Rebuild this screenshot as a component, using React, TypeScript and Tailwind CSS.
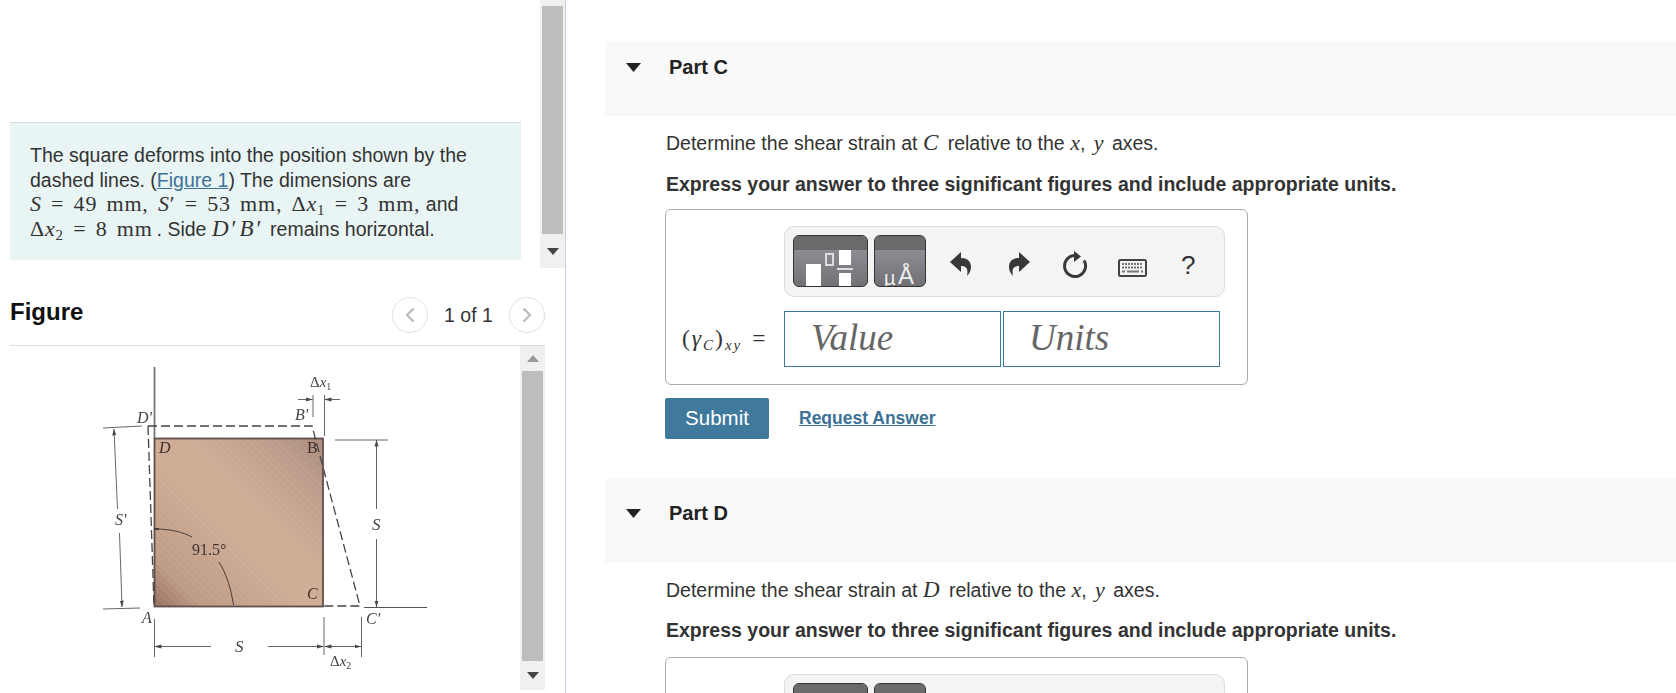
import React from "react";

const sans = "font-['Liberation_Sans',Arial,sans-serif]";
const serif = "font-['Liberation_Serif','Times_New_Roman',serif]";

function M({ children }: { children: React.ReactNode }) {
  return <span className={`${serif} text-[22px] tracking-[0.8px] [word-spacing:3px] text-[#333]`}>{children}</span>;
}
function I({ children }: { children: React.ReactNode }) {
  return <i className={serif}>{children}</i>;
}

function Arrow({ dir, color }: { dir: "up" | "down"; color: string }) {
  return (
    <svg width="12" height="7" viewBox="0 0 12 7" className="block">
      <polygon points={dir === "down" ? "0,0 12,0 6,7" : "0,7 12,7 6,0"} fill={color} />
    </svg>
  );
}

function Figure() {
  const thin = { stroke: "#666", strokeWidth: 1, fill: "none" };
  const dash = { stroke: "#444", strokeWidth: 1.3, fill: "none", strokeDasharray: "9 4" };
  const label = "font-['Liberation_Serif',serif] italic";
  return (
    <svg width="370" height="343" viewBox="0 0 370 343" className="block">
      <defs>
        <linearGradient id="plate" x1="0" y1="1" x2="1" y2="0">
          <stop offset="0" stopColor="#96705f" />
          <stop offset="0.14" stopColor="#bd9a85" />
          <stop offset="0.45" stopColor="#cfac95" />
          <stop offset="0.62" stopColor="#cdab94" />
          <stop offset="0.85" stopColor="#bb9b89" />
          <stop offset="1" stopColor="#a98a7e" />
        </linearGradient>
        <pattern id="hatch" width="5" height="5" patternUnits="userSpaceOnUse" patternTransform="rotate(45)">
          <rect width="5" height="2" fill="#ffffff" opacity="0.05" />
        </pattern>
        <filter id="soft" x="-5%" y="-5%" width="110%" height="110%">
          <feGaussianBlur stdDeviation="0.5" />
        </filter>
        <marker id="tip" markerWidth="7" markerHeight="6" refX="6.5" refY="3" orient="auto-start-reverse">
          <polygon points="0,1 7,3 0,5" fill="#4a4a4a" />
        </marker>
      </defs>
      <g filter="url(#soft)">
        <line x1="74.5" y1="18" x2="74.5" y2="89" stroke="#777" strokeWidth="1.8" />
        <rect x="74.5" y="89.5" width="168.5" height="168" fill="url(#plate)" />
        <rect x="74.5" y="89.5" width="168.5" height="168" fill="url(#hatch)" />
        <rect x="74.5" y="89.5" width="168.5" height="168" fill="none" stroke="#5f4f4a" strokeWidth="1.8" />

        <path d="M68 77 L74 257 M68 77 H232 L280 257 H243" {...dash} />
        <path d="M284 258.5 H347" stroke="#555" strokeWidth="1.2" />
        <path d="M23 260 L60 259" {...thin} />
        <path d="M23 79 L62 77" {...thin} />
        <line x1="39.5" y1="184" x2="42" y2="258" {...thin} markerEnd="url(#tip)" />
        <line x1="34" y1="80" x2="37.5" y2="160" {...thin} markerStart="url(#tip)" />

        <path d="M255 91 H308" {...thin} />
        <line x1="296.5" y1="91" x2="296.5" y2="160" {...thin} markerStart="url(#tip)" />
        <line x1="296.5" y1="190" x2="296.5" y2="258" {...thin} markerEnd="url(#tip)" />

        <path d="M74.5 270 V308 M244 268 V306 M281.5 268 V308" {...thin} />
        <line x1="75" y1="297.5" x2="131" y2="297.5" {...thin} markerStart="url(#tip)" />
        <line x1="188" y1="297.5" x2="243.5" y2="297.5" {...thin} markerEnd="url(#tip)" />
        <line x1="245" y1="297.5" x2="281" y2="297.5" {...thin} markerStart="url(#tip)" markerEnd="url(#tip)" />

        <path d="M233 46 V68 M244.5 46 V87" {...thin} />
        <line x1="218" y1="50.5" x2="232.5" y2="50.5" {...thin} markerEnd="url(#tip)" />
        <line x1="260" y1="50.5" x2="245" y2="50.5" {...thin} markerEnd="url(#tip)" />

        <path d="M76 180 C90 180 103 183 112 188 M139 213 C147 226 151 240 153.5 256" stroke="#4a3d38" strokeWidth="1" fill="none" />
        <path d="M74 180 H79" stroke="#333" strokeWidth="1.6" />
        <text x="112" y="206" fontSize="16" fill="#3f3330" className="font-['Liberation_Serif',serif]">91.5°</text>

        <text x="57" y="74" fontSize="16" fill="#444" className={label}>D'</text>
        <text x="215" y="71" fontSize="16" fill="#444" className={label}>B'</text>
        <text x="79" y="104" fontSize="16" fill="#3d2e2a" className={label}>D</text>
        <text x="227" y="104" fontSize="16" fill="#3d2e2a" className="font-['Liberation_Serif',serif]">B</text>
        <text x="227" y="250" fontSize="16" fill="#3d2e2a" className={label}>C</text>
        <text x="62" y="274" fontSize="16" fill="#444" className={label}>A</text>
        <text x="286" y="275" fontSize="16" fill="#444" className={label}>C'</text>
        <text x="35" y="176" fontSize="16" fill="#444" className={label}>S'</text>
        <text x="292" y="181" fontSize="17" fill="#444" className={label}>S</text>
        <text x="155" y="303" fontSize="17" fill="#444" className={label}>S</text>
        <text x="230" y="38" fontSize="15" fill="#444" className="font-['Liberation_Serif',serif]">Δ<tspan fontStyle="italic">x</tspan><tspan fontSize="10" dy="3">1</tspan></text>
        <text x="250" y="317" fontSize="15" fill="#444" className="font-['Liberation_Serif',serif]">Δ<tspan fontStyle="italic">x</tspan><tspan fontSize="10" dy="3">2</tspan></text>
      </g>
    </svg>
  );
}

function TemplateButton({ wide, bare }: { wide?: boolean; bare?: boolean }) {
  return (
    <div className={`${wide ? "w-[75px]" : "w-[52px]"} h-[52px] shrink-0 rounded-[6px] border border-[#333] overflow-hidden bg-gradient-to-b from-[#98979e] to-[#717176]`}>
      <div className="h-[14px] bg-[#6a6a6a]" />
      {bare ? null : wide ? (
        <svg width="73" height="36" viewBox="0 0 73 36" className="block">
          <rect x="12" y="14" width="15" height="22" fill="#fff" />
          <rect x="32" y="4" width="7" height="11" fill="none" stroke="#ddd" strokeWidth="2" />
          <rect x="45" y="0" width="12" height="15" fill="#fff" />
          <rect x="43" y="18" width="16" height="2" fill="#ddd" />
          <rect x="45" y="23" width="12" height="13" fill="#fff" />
        </svg>
      ) : (
        <div className={`relative h-[36px] ${sans} text-[#eee]`}>
          <span className="absolute left-[9px] top-[20px] text-[20px] leading-[16px]">µ</span>
          <span className="absolute left-[23px] top-[16px] text-[24px] leading-[20px]">Å</span>
        </div>
      )}
    </div>
  );
}

function Toolbar({ bare }: { bare?: boolean }) {
  return (
    <div className="ml-[118px] w-[441px] h-[71px] shrink-0 rounded-[10px] border border-[#ddd] bg-[#f4f4f4] flex items-start pt-[8px] pl-[8px] gap-[6px]">
      <TemplateButton wide bare={bare} />
      <TemplateButton bare={bare} />
      {bare ? null : (
        <div className="flex items-start ml-[-6px] text-[#333]">
          <svg width="21" height="24" viewBox="0 0 21 24" className="ml-[24px] mt-[17px]">
            <path d="M0 10 L11 0 V6 C18 6 21 10 21 15 C21 19 19 22 17 24 C18 19 18 14 11 14 V20 Z" fill="#383838" />
          </svg>
          <svg width="21" height="24" viewBox="0 0 21 24" className="ml-[38px] mt-[17px] -scale-x-100">
            <path d="M0 10 L11 0 V6 C18 6 21 10 21 15 C21 19 19 22 17 24 C18 19 18 14 11 14 V20 Z" fill="#383838" />
          </svg>
          <svg width="26" height="28" viewBox="0 0 26 28" className="ml-[32px] mt-[16px]">
            <path d="M13 4.5 A10.5 10.5 0 1 0 22 9.5" fill="none" stroke="#383838" strokeWidth="3" />
            <polygon points="12,0 19,5.5 12,11" fill="#383838" />
          </svg>
          <svg width="29" height="18" viewBox="0 0 29 18" className="ml-[30px] mt-[24px]">
            <rect x="1" y="1" width="27" height="16" rx="1.5" fill="#f4f4f4" stroke="#444" strokeWidth="2" />
            <path d="M4 5 H25 M4 8.5 H25" stroke="#777" strokeWidth="2" strokeDasharray="2 1" />
            <path d="M4 12.5 H7 M9 12.5 H21 M23 12.5 H25" stroke="#777" strokeWidth="2" />
          </svg>
          <div className={`ml-[34px] mt-[15px] ${sans} text-[26px] leading-[30px] text-[#333]`}>?</div>
        </div>
      )}
    </div>
  );
}

function Part({ letter, tall }: { letter: string; tall?: boolean }) {
  return (
    <>
      <div className={`${tall ? "h-[85px] pt-[24px]" : "h-[75px] pt-[15px]"} bg-[#f9f9f9] flex items-start`}>
        <div className="ml-[21px] w-[29px] pt-[7px]">
          <svg width="15" height="9" viewBox="0 0 15 9" className="block"><polygon points="0,0 15,0 7.5,9" fill="#222" /></svg>
        </div>
        <div className="ml-[14px] text-[20px] leading-[22px] font-bold text-[#222]">Part {letter}</div>
      </div>
      <div className="ml-[61px]">
        <p className="mt-[15px] text-[19.5px] leading-[24px] text-[#333] whitespace-nowrap">
          Determine the shear strain at <span className={`${serif} italic text-[23px] mr-[4px]`}>{letter}</span> relative to the <span className={`${serif} italic text-[22px]`}>x</span>, <span className={`${serif} italic text-[22px] mx-[3px]`}>y</span> axes.
        </p>
        <p className={`${tall ? "mt-[16px]" : "mt-[17px]"} text-[19.5px] leading-[24px] font-bold text-[#333] whitespace-nowrap`}>
          Express your answer to three significant figures and include appropriate units.
        </p>
      </div>
    </>
  );
}

export default function App() {
  return (
    <div className={`w-[1676px] h-[693px] overflow-hidden bg-white flex ${sans}`}>
      {/* left column */}
      <div className="w-[566px] h-full shrink-0 flex flex-col border-r border-[#c6d0e4]">
        <div className="flex h-[287px] shrink-0">
          <div className="w-[540px] pt-[122px] pl-[10px]">
            <div className="w-[511px] h-[138px] border-t border-[#dcdcdc] bg-[#e9f5f5] pt-[20px] pl-[20px] text-[19.5px] leading-[24.6px] text-[#333] whitespace-nowrap">
              <p className="h-[24.6px]">The square deforms into the position shown by the</p>
              <p className="h-[24.6px]">dashed lines. (<a className="text-[#3b7296] underline">Figure 1</a>) The dimensions are</p>
              <p className="h-[24.6px]"><M><I>S</I> = 49 mm, <I>S</I>′ = 53 mm, Δ<I>x</I><sub className="text-[15px]">1</sub> = 3 mm,</M> and</p>
              <p className="h-[24.6px]"><M>Δ<I>x</I><sub className="text-[15px]">2</sub> = 8 mm</M><span className="ml-[4px]">.</span> Side <span className={`${serif} text-[23px] tracking-[3px] text-[#333]`}><I>D</I>′<I>B</I>′</span> remains horizontal.</p>
            </div>
          </div>
          <div className="w-[25px] h-[268px] bg-[#f0f0f0] flex flex-col items-center pt-[6px]">
            <div className="w-[21px] h-[228px] bg-[#bdbdbd]" />
            <div className="flex-1 flex items-center justify-center"><Arrow dir="down" color="#444" /></div>
          </div>
        </div>

        <div className="ml-[10px] w-[535px] h-[60px] -mt-[1px] shrink-0 border-b border-[#dcdcdc] flex items-start">
          <div className="text-[24px] leading-[28px] font-bold text-[#111] mt-[12px]">Figure</div>
          <div className="ml-auto flex items-center mt-[11px] text-[19.5px] text-[#333]">
            <div className="w-[36px] h-[36px] rounded-full border border-[#e2e2e2] flex items-center justify-center">
              <svg width="10" height="16" viewBox="0 0 10 16"><path d="M8.5 1.5 L2 8 L8.5 14.5" fill="none" stroke="#bbb" strokeWidth="2.2" /></svg>
            </div>
            <div className="w-[81px] text-center pt-[2px]">1 of 1</div>
            <div className="w-[36px] h-[36px] rounded-full border border-[#e2e2e2] flex items-center justify-center">
              <svg width="10" height="16" viewBox="0 0 10 16"><path d="M1.5 1.5 L8 8 L1.5 14.5" fill="none" stroke="#bbb" strokeWidth="2.2" /></svg>
            </div>
          </div>
        </div>

        <div className="flex flex-1 min-h-0">
          <div className="w-[520px] pl-[80px] pt-[3px]"><Figure /></div>
          <div className="w-[25px] h-[344px] bg-[#f0f0f0] flex flex-col items-center">
            <div className="h-[25px] flex items-center justify-center"><Arrow dir="up" color="#999" /></div>
            <div className="w-[21px] h-[290px] bg-[#bdbdbd]" />
            <div className="flex-1 flex items-center justify-center"><Arrow dir="down" color="#444" /></div>
          </div>
        </div>
      </div>

      {/* right column */}
      <div className="flex-1 min-w-0 pt-[41px] pl-[39px]">
        <Part letter="C" />
        <div className="ml-[60px] mt-[13px] w-[583px] h-[176px] rounded-[6px] border border-[#aaa] pt-[16px] flex flex-col">
          <Toolbar />
          <div className="flex items-center mt-[14px]">
            <div className={`w-[118px] pl-[16px] ${serif} text-[23.5px] tracking-[2px] [word-spacing:2px] text-[#333] whitespace-nowrap`}>
              (<I>γ</I><sub className="text-[15px] italic">C</sub>)<sub className="text-[15px] italic">xy</sub> =
            </div>
            <div className={`w-[217px] h-[56px] border border-[#3d7a9e] pl-[26px] ${serif} italic text-[37px] leading-[52px] text-[#666]`}>Value</div>
            <div className={`ml-[2px] w-[217px] h-[56px] border border-[#3d7a9e] pl-[25px] ${serif} italic text-[37px] leading-[52px] text-[#666]`}>Units</div>
          </div>
        </div>
        <div className="ml-[60px] mt-[13px] flex items-center">
          <div className="w-[104px] h-[41px] rounded-[2px] bg-[#3f7a9d] text-white text-[20.5px] flex items-center justify-center">Submit</div>
          <a className="ml-[30px] text-[17.5px] font-bold text-[#3b7296] underline">Request Answer</a>
        </div>
        <div className="mt-[39px]">
          <Part letter="D" tall />
        </div>
        <div className="ml-[60px] mt-[15px] w-[583px] h-[175px] rounded-[6px] border border-[#aaa] pt-[16px] flex flex-col">
          <Toolbar bare />
        </div>
      </div>
    </div>
  );
}
